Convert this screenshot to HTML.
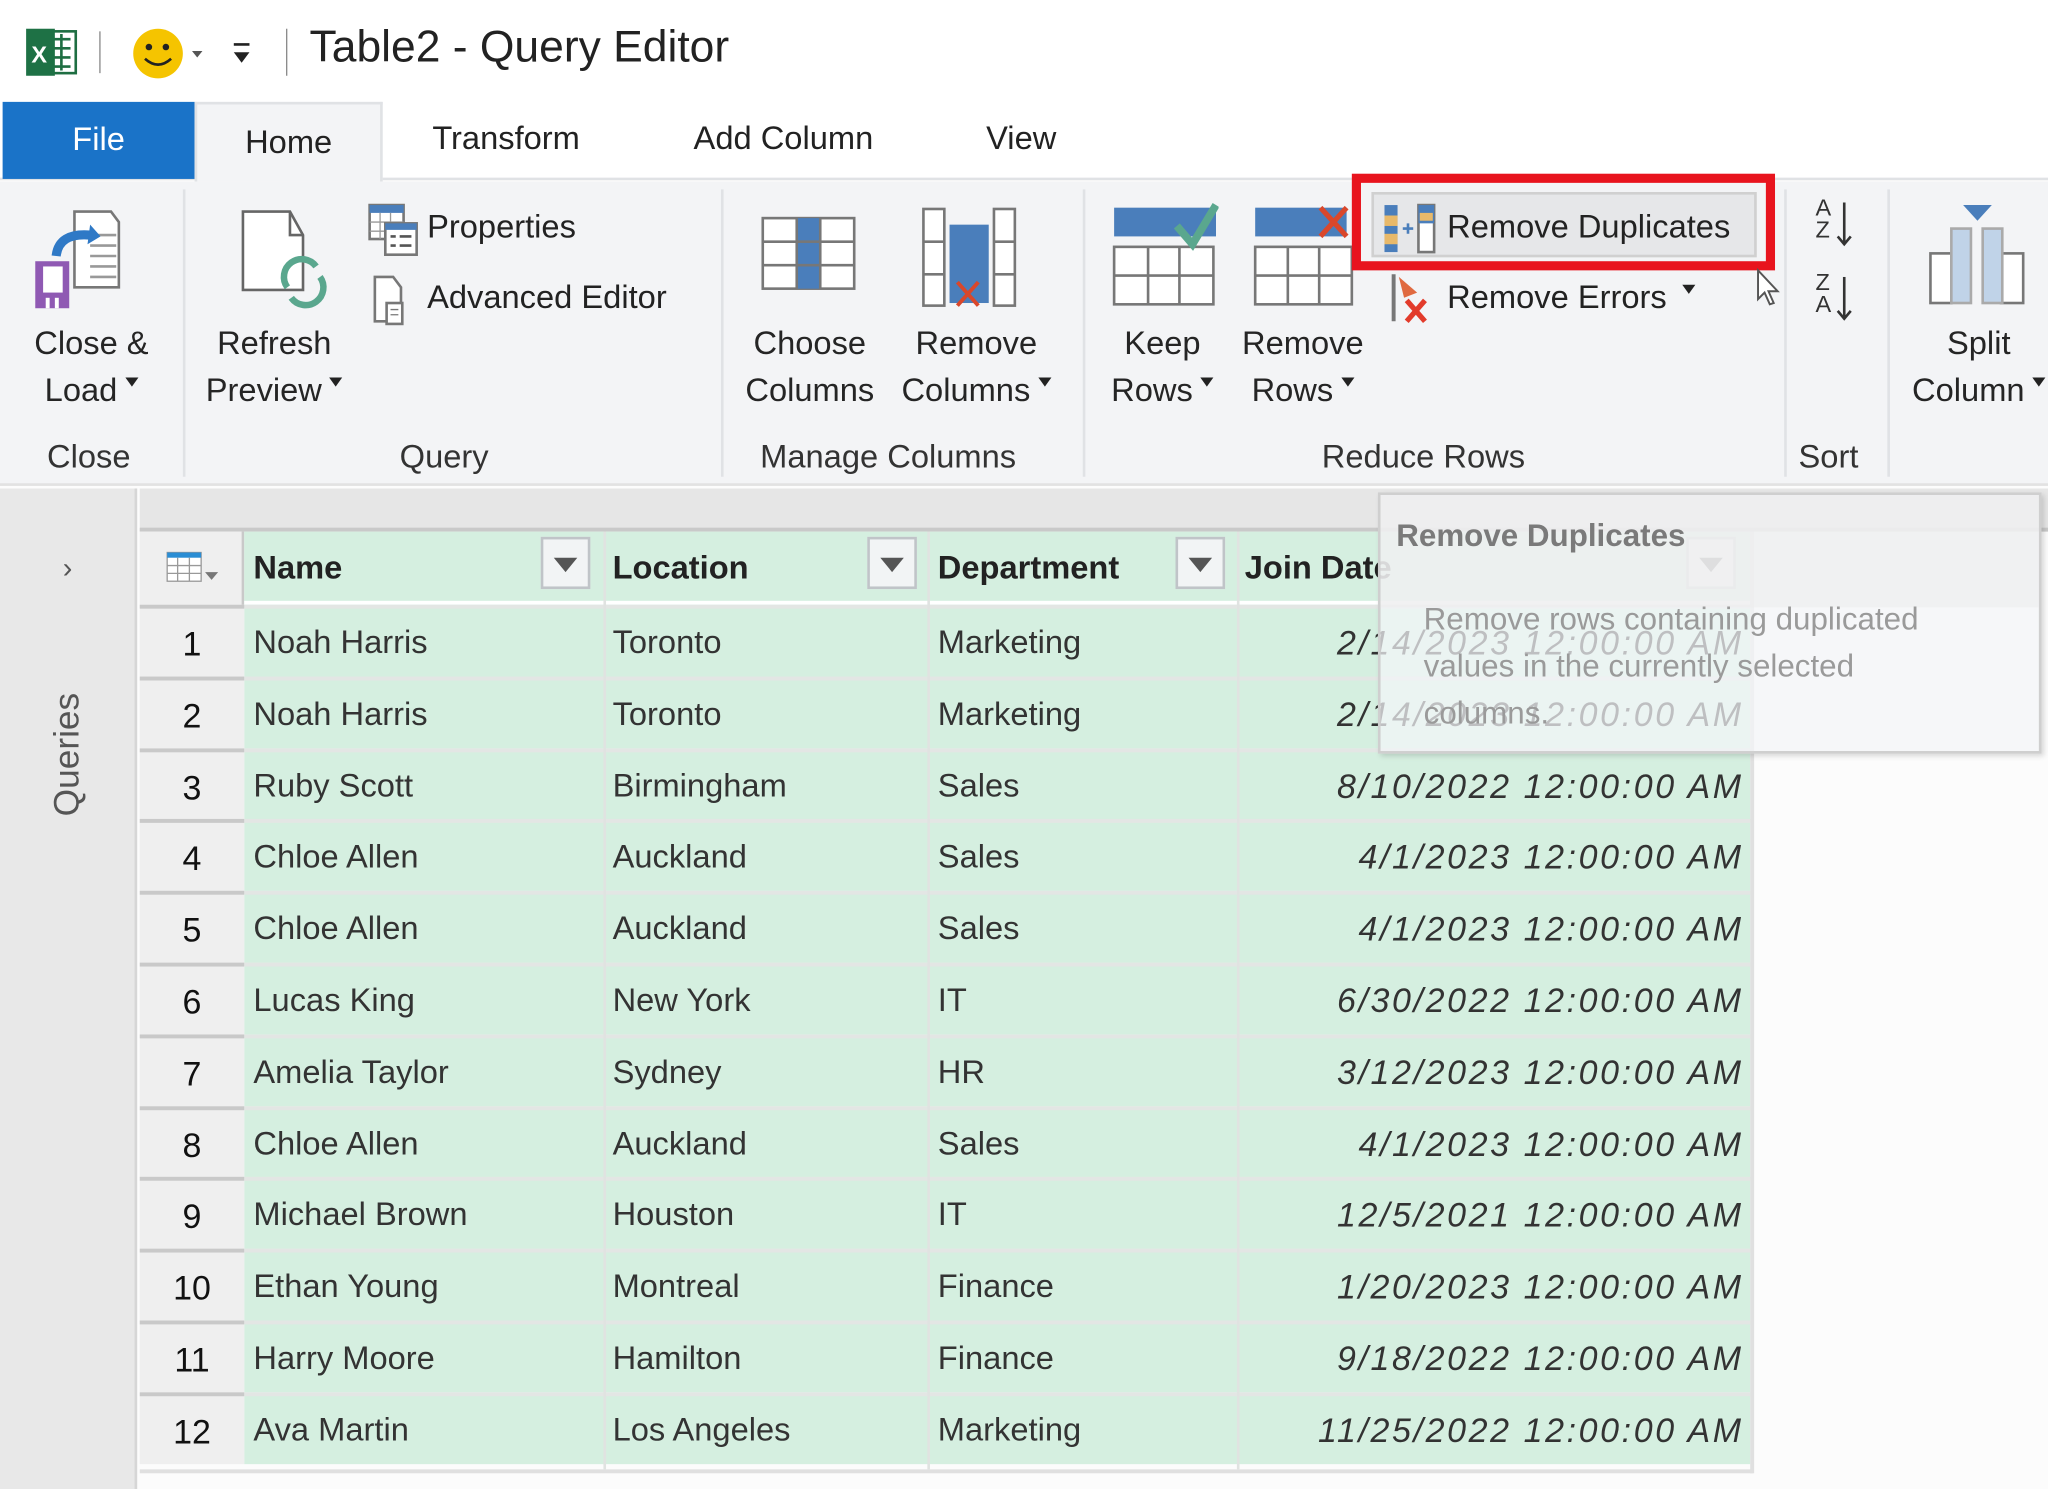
<!DOCTYPE html>
<html><head><meta charset="utf-8"><style>
*{margin:0;padding:0;box-sizing:border-box}
html,body{width:2048px;height:1489px;overflow:hidden;background:#fcfcfc}
#w{position:absolute;left:0;top:0;width:1568px;height:1140px;transform:scale(1.30612);transform-origin:0 0;font-family:"Liberation Sans",sans-serif;color:#222}
.a{position:absolute;white-space:nowrap}
.rl{font-size:25px;color:#252525;line-height:36px;text-align:center}
.gl{font-size:25px;color:#333}
.sep{position:absolute;top:145px;width:2px;height:220px;background:#e0e2e5}
.tri{display:inline-block;width:0;height:0;border-left:5px solid transparent;border-right:5px solid transparent;border-top:7px solid #222;vertical-align:middle;margin-left:6px;position:relative;top:-8px}
.cell{position:absolute;font-size:25px;line-height:54px;color:#333;white-space:nowrap}
.num{position:absolute;left:107px;width:80px;text-align:center;font-size:26px;line-height:54px;color:#111;background:#efefef;border-top:3px solid #c9c9c9}
.row{position:absolute;left:187px;width:1153px;background:#d5efe0;border-top:3px solid #e3e6e4}
.dt{position:absolute;right:233px;font-style:italic;font-size:26px;letter-spacing:2px;line-height:54px;color:#333;white-space:nowrap}
.dd{position:absolute;top:411px;width:38px;height:40px;border:2px solid #c0c4c8;background:#f2f4f5}
.dd:after{content:"";position:absolute;left:8px;top:14px;border-left:9px solid transparent;border-right:9px solid transparent;border-top:11px solid #555}
.vl{position:absolute;top:407px;width:2px;height:718px;background:#e0e3e1}
</style></head><body><div id="w">
<div class="a" style="left:0;top:0;width:1568px;height:78px;background:#fff"></div>
<svg class="a" style="left:18px;top:18px" width="44" height="44" viewBox="0 0 44 44"><rect x="14" y="6" width="26" height="32" fill="#fff" stroke="#1e6e42" stroke-width="2"/><path d="M22 12h14M22 19h14M22 26h14M22 33h14M29 8v28" stroke="#1e6e42" stroke-width="2"/><rect x="2" y="4" width="22" height="36" fill="#1e7145"/><text x="6" y="30" font-family="Liberation Sans" font-size="18" font-weight="bold" fill="#fff">X</text></svg>
<div class="a" style="left:76px;top:24px;width:1px;height:32px;background:#888"></div>
<svg class="a" style="left:100px;top:20px" width="62" height="42"><circle cx="21" cy="21" r="19" fill="#f5c400"/><circle cx="14" cy="16" r="2.5" fill="#222"/><circle cx="27" cy="16" r="2.5" fill="#222"/><path d="M11 25q10 9 20 0" stroke="#222" stroke-width="2" fill="none"/><path d="M47 19l8 0l-4 5z" fill="#555"/></svg>
<svg class="a" style="left:177px;top:32px" width="16" height="18"><path d="M2 2h12" stroke="#222" stroke-width="2"/><path d="M2 8h12l-6 8z" fill="#222"/></svg>
<div class="a" style="left:219px;top:22px;width:1px;height:36px;background:#888"></div>
<div class="a" style="left:237px;top:17px;font-size:34px;color:#222">Table2 - Query Editor</div>
<div class="a" style="left:0;top:78px;width:1568px;height:60px;background:#fff;border-bottom:2px solid #e0e2e5"></div>
<div class="a" style="left:2px;top:78px;width:147px;height:59px;background:#1a73c8;color:#fff;font-size:25px;line-height:59px;text-align:center">File</div>
<div class="a" style="left:149px;top:78px;width:144px;height:61px;background:#f3f4f6;border:2px solid #e0e2e5;border-bottom:none;font-size:25px;line-height:58px;text-align:center;color:#222">Home</div>
<div class="a" style="left:331px;top:92px;font-size:25px">Transform</div>
<div class="a" style="left:531px;top:92px;font-size:25px">Add Column</div>
<div class="a" style="left:755px;top:92px;font-size:25px">View</div>
<div class="a" style="left:0;top:139px;width:1568px;height:233px;background:#f3f4f6;border-bottom:2px solid #e2e2e2"></div>
<div class="sep" style="left:140px"></div><div class="sep" style="left:552px"></div><div class="sep" style="left:829px"></div><div class="sep" style="left:1366px"></div><div class="sep" style="left:1445px"></div>
<svg class="a" style="left:25px;top:160px" width="85" height="80"><path d="M42 2h18l6 8v50h-34v-58z" fill="#fff" stroke="#777" stroke-width="2"/><path d="M44 20h20M44 28h20M44 36h20M44 44h20M44 52h20" stroke="#999" stroke-width="2"/><path d="M18 36q2-18 26-16" stroke="#2f79c6" stroke-width="7" fill="none"/><path d="M44 12l8 9l-10 6z" fill="#2f79c6"/><rect x="2" y="40" width="26" height="36" fill="#8f59b3"/><rect x="8" y="44" width="15" height="20" fill="#fff"/><rect x="10" y="68" width="3" height="8" fill="#fff"/><rect x="17" y="68" width="3" height="8" fill="#fff"/></svg>
<div class="a rl" style="left:10px;top:245px;width:120px">Close &amp;<br>Load<span class="tri"></span></div>
<div class="a gl" style="left:36px;top:336px">Close</div>
<svg class="a" style="left:180px;top:160px" width="80" height="80"><path d="M6 2h36l10 18v42h-46z" fill="#fff" stroke="#666" stroke-width="2"/><path d="M42 2v18h10" fill="none" stroke="#666" stroke-width="2"/><path d="M40 60a13 13 0 0 1 22-16M65 52a13 13 0 0 1-22 16" stroke="#5aa78e" stroke-width="5" fill="none"/></svg>
<div class="a rl" style="left:145px;top:245px;width:130px">Refresh<br>Preview<span class="tri"></span></div>
<svg class="a" style="left:281px;top:155px" width="42" height="42"><rect x="2" y="2" width="26" height="26" fill="#fff" stroke="#777" stroke-width="2"/><rect x="2" y="2" width="26" height="6" fill="#4a7ebb"/><path d="M10 8v20M18 8v20M2 15h26M2 22h26" stroke="#999"/><rect x="14" y="16" width="24" height="24" fill="#fff" stroke="#777" stroke-width="2"/><rect x="14" y="16" width="24" height="5" fill="#4a7ebb"/><path d="M18 26h4M25 26h9M18 33h4M25 33h9" stroke="#555" stroke-width="2"/></svg>
<div class="a" style="left:327px;top:160px;font-size:25px;color:#222">Properties</div>
<svg class="a" style="left:284px;top:210px" width="40" height="42"><path d="M3 2h14l6 8v26h-20z" fill="#fff" stroke="#777" stroke-width="2"/><rect x="12" y="22" width="12" height="16" fill="#fff" stroke="#777" stroke-width="2"/><path d="M15 27h6M15 31h6" stroke="#777"/></svg>
<div class="a" style="left:327px;top:214px;font-size:25px;color:#222">Advanced Editor</div>
<div class="a gl" style="left:306px;top:336px">Query</div>
<svg class="a" style="left:582px;top:165px" width="76" height="60"><rect x="2" y="2" width="70" height="54" fill="#fff" stroke="#777" stroke-width="2"/><rect x="28" y="2" width="18" height="54" fill="#4a7ebb"/><path d="M2 20h70M2 38h70M28 2v54M46 2v54" stroke="#777" stroke-width="2"/></svg>
<svg class="a" style="left:705px;top:158px" width="80" height="80"><rect x="2" y="2" width="16" height="74" fill="#fff" stroke="#777" stroke-width="2"/><rect x="56" y="2" width="16" height="74" fill="#fff" stroke="#777" stroke-width="2"/><path d="M2 27h16M2 52h16M56 27h16M56 52h16" stroke="#777" stroke-width="2"/><rect x="22" y="14" width="30" height="60" fill="#4a7ebb"/><path d="M28 58l16 18M44 58l-16 18" stroke="#d9472b" stroke-width="3"/></svg>
<div class="a rl" style="left:560px;top:245px;width:120px">Choose<br>Columns</div>
<div class="a rl" style="left:680px;top:245px;width:135px">Remove<br>Columns<span class="tri"></span></div>
<div class="a gl" style="left:582px;top:336px">Manage Columns</div>
<svg class="a" style="left:851px;top:155px" width="82" height="80"><rect x="2" y="4" width="78" height="22" fill="#4a7ebb"/><rect x="2" y="34" width="76" height="44" fill="#fff" stroke="#777" stroke-width="2"/><path d="M2 56h76M28 34v44M52 34v44" stroke="#777" stroke-width="2"/><path d="M50 18l12 14l18-30" stroke="#5aa78e" stroke-width="6" fill="none"/></svg>
<svg class="a" style="left:959px;top:155px" width="82" height="80"><rect x="2" y="4" width="70" height="22" fill="#4a7ebb"/><rect x="2" y="34" width="74" height="44" fill="#fff" stroke="#777" stroke-width="2"/><path d="M2 56h74M27 34v44M51 34v44" stroke="#777" stroke-width="2"/><path d="M52 4l20 22M72 4l-20 22" stroke="#d9472b" stroke-width="4"/></svg>
<div class="a rl" style="left:840px;top:245px;width:100px">Keep<br>Rows<span class="tri"></span></div>
<div class="a rl" style="left:945px;top:245px;width:105px">Remove<br>Rows<span class="tri"></span></div>
<div class="a" style="left:1050px;top:147px;width:295px;height:50px;background:#e6e7e9;border:2px solid #d0d0d0"></div>
<svg class="a" style="left:1058px;top:155px" width="46" height="40"><rect x="2" y="2" width="10" height="36" fill="#4a7ebb"/><rect x="2" y="10" width="10" height="8" fill="#e8b96a"/><rect x="2" y="24" width="10" height="8" fill="#e8b96a"/><rect x="28" y="2" width="12" height="36" fill="#fff" stroke="#777" stroke-width="2"/><rect x="28" y="2" width="12" height="14" fill="#4a7ebb"/><rect x="29" y="8" width="10" height="6" fill="#e8b96a"/><path d="M16 20h8M20 16v8" stroke="#4a7ebb" stroke-width="2"/></svg>
<div class="a" style="left:1108px;top:160px;font-size:25px;color:#222">Remove Duplicates</div>
<div class="a" style="left:1035px;top:133px;width:324px;height:74px;border:7px solid #e8141e"></div>
<svg class="a" style="left:1063px;top:208px" width="40" height="40"><path d="M4 2v36" stroke="#777" stroke-width="3"/><path d="M8 4l14 12l-10 4z" fill="#e06a40"/><path d="M14 22l14 16M28 22l-14 16" stroke="#e23b2b" stroke-width="4"/></svg>
<div class="a" style="left:1108px;top:214px;font-size:25px;color:#222">Remove Errors<span class="tri" style="margin-left:12px"></span></div>
<svg class="a" style="left:1343px;top:205px" width="30" height="30"><path d="M3 2v22l5-5 4 9 3-1-4-9h7z" fill="#fff" stroke="#555" stroke-width="1.5"/></svg>
<div class="a gl" style="left:1012px;top:336px">Reduce Rows</div>
<div class="a" style="left:1390px;top:151px;font-size:18px;line-height:17px;color:#333">A<br>Z</div><svg class="a" style="left:1405px;top:155px" width="14" height="36"><path d="M7 0v32M2 26l5 6l5-6" stroke="#333" stroke-width="2" fill="none"/></svg>
<div class="a" style="left:1390px;top:208px;font-size:18px;line-height:17px;color:#333">Z<br>A</div><svg class="a" style="left:1405px;top:212px" width="14" height="36"><path d="M7 0v32M2 26l5 6l5-6" stroke="#333" stroke-width="2" fill="none"/></svg>
<div class="a gl" style="left:1377px;top:336px">Sort</div>
<svg class="a" style="left:1475px;top:155px" width="80" height="80"><path d="M28 2h22l-11 12z" fill="#4a7ebb"/><rect x="3" y="39" width="16" height="38" fill="#fff" stroke="#777" stroke-width="2"/><rect x="57" y="39" width="17" height="38" fill="#fff" stroke="#777" stroke-width="2"/><rect x="19" y="20" width="15" height="57" fill="#c0d3e8" stroke="#aaa" stroke-width="2"/><rect x="43" y="20" width="15" height="57" fill="#c0d3e8" stroke="#aaa" stroke-width="2"/></svg>
<div class="a rl" style="left:1450px;top:245px;width:130px">Split<br>Column<span class="tri"></span></div>
<div class="a" style="left:0;top:374px;width:105px;height:766px;background:#e8e8e8;border-right:2px solid #d6d6d6"></div>
<div class="a" style="left:48px;top:422px;font-size:22px;color:#555">›</div>
<div class="a" style="left:36px;top:625px;font-size:27px;color:#555;transform:rotate(-90deg);transform-origin:0 0">Queries</div>
<div class="a" style="left:107px;top:374px;width:1461px;height:33px;background:#e6e6e6;border-bottom:3px solid #c9c9c9"></div>
<div class="a" style="left:107px;top:407px;width:80px;height:58px;background:#efefef;border-right:2px solid #c9c9c9"></div>
<svg class="a" style="left:127px;top:421px" width="46" height="30"><rect x="1" y="2" width="26" height="22" fill="#fff" stroke="#999"/><rect x="1" y="2" width="26" height="4" fill="#2a8dd4"/><path d="M1 12h26M1 18h26M9 6v18M18 6v18" stroke="#999"/><path d="M30 17h10l-5 6z" fill="#777"/></svg>
<div class="a" style="left:187px;top:407px;width:1153px;height:56px;background:#d5efe0;border-bottom:3px solid #fff"></div>
<div class="cell" style="left:194px;top:408px;font-weight:bold;color:#222">Name</div>
<div class="cell" style="left:469px;top:408px;font-weight:bold;color:#222">Location</div>
<div class="cell" style="left:718px;top:408px;font-weight:bold;color:#222">Department</div>
<div class="cell" style="left:953px;top:408px;font-weight:bold;color:#222">Join Date</div>
<div class="dd" style="left:414px"></div><div class="dd" style="left:664px"></div><div class="dd" style="left:900px"></div><div class="dd" style="left:1291px"></div>
<div id="rows"></div>
<div class="vl" style="left:462px"></div><div class="vl" style="left:710px"></div><div class="vl" style="left:947px"></div>
<div class="a" style="left:107px;top:1125px;width:1235px;height:3px;background:#e0e0e0"></div>
<div class="a" style="left:1340px;top:407px;width:3px;height:721px;background:#e0e0e0"></div>
<script>
var d=[["Noah Harris","Toronto","Marketing","2/14/2023"],["Noah Harris","Toronto","Marketing","2/14/2023"],["Ruby Scott","Birmingham","Sales","8/10/2022"],["Chloe Allen","Auckland","Sales","4/1/2023"],["Chloe Allen","Auckland","Sales","4/1/2023"],["Lucas King","New York","IT","6/30/2022"],["Amelia Taylor","Sydney","HR","3/12/2023"],["Chloe Allen","Auckland","Sales","4/1/2023"],["Michael Brown","Houston","IT","12/5/2021"],["Ethan Young","Montreal","Finance","1/20/2023"],["Harry Moore","Hamilton","Finance","9/18/2022"],["Ava Martin","Los Angeles","Marketing","11/25/2022"]];
var h="";d.forEach(function(r,i){var t=(463+i*54.8).toFixed(1);h+='<div class="row" style="top:'+t+'px;height:55px"></div><div class="num" style="top:'+t+'px;height:55px">'+(i+1)+'</div><div class="cell" style="left:194px;top:'+(+t+2)+'px">'+r[0]+'</div><div class="cell" style="left:469px;top:'+(+t+2)+'px">'+r[1]+'</div><div class="cell" style="left:718px;top:'+(+t+2)+'px">'+r[2]+'</div><div class="dt" style="top:'+(+t+2)+'px">'+r[3]+' 12:00:00 AM</div>';});
document.getElementById("rows").innerHTML=h;
</script>
<div class="a" style="left:1055px;top:377px;width:508px;height:200px;background:rgba(244,245,248,0.72);border:2px solid #cfcfcf;box-shadow:2px 2px 4px rgba(0,0,0,0.15)"></div>
<div class="a" style="left:1057px;top:379px;width:504px;height:86px;background:rgba(236,236,236,0.6)"></div>
<div class="a" style="left:1069px;top:397px;font-size:24px;font-weight:bold;color:#7a7a7a">Remove Duplicates</div>
<div class="a" style="left:1090px;top:457px;font-size:24px;line-height:36px;color:#9a9a9a">Remove rows containing duplicated<br>values in the currently selected<br>columns.</div>
</div></body></html>
